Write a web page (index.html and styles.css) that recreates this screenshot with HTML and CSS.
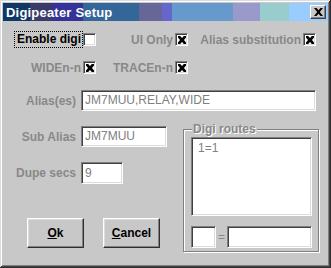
FILE: index.html
```html
<!DOCTYPE html>
<html>
<head>
<meta charset="utf-8">
<link rel="stylesheet" href="styles.css">
</head>
<body>
<div class="win">
  <div class="title">
    <span class="title-text">Digipeater Setup</span>
    <span class="close"><svg width="9" height="8" viewBox="0 0 9 8"><path d="M0 0h2.5l2 2.3 2-2.3h2.5l-3.2 4 3.2 4h-2.5l-2-2.3-2 2.3h-2.5l3.2-4z" fill="#000"/></svg></span>
  </div>
  <div class="checks">
    <span class="lbl lbl-focus"><span class="focus">Enable digi</span></span>
    <span class="cb"></span>
    <span class="lbl dis">UI Only</span>
    <span class="cb"><svg width="8" height="8" viewBox="0 0 8 8"><path d="M0 0h2.2l1.8 2 1.8-2h2.2v1.6l-2 2.4 2 2.4v1.6h-2.2l-1.8-2-1.8 2h-2.2v-1.6l2-2.4-2-2.4z" fill="#000"/></svg></span>
    <span class="lbl dis">Alias substitution</span>
    <span class="cb"><svg width="8" height="8" viewBox="0 0 8 8"><path d="M0 0h2.2l1.8 2 1.8-2h2.2v1.6l-2 2.4 2 2.4v1.6h-2.2l-1.8-2-1.8 2h-2.2v-1.6l2-2.4-2-2.4z" fill="#000"/></svg></span>
    <span class="lbl dis">WIDEn-n</span>
    <span class="cb"><svg width="8" height="8" viewBox="0 0 8 8"><path d="M0 0h2.2l1.8 2 1.8-2h2.2v1.6l-2 2.4 2 2.4v1.6h-2.2l-1.8-2-1.8 2h-2.2v-1.6l2-2.4-2-2.4z" fill="#000"/></svg></span>
    <span class="lbl dis">TRACEn-n</span>
    <span class="cb"><svg width="8" height="8" viewBox="0 0 8 8"><path d="M0 0h2.2l1.8 2 1.8-2h2.2v1.6l-2 2.4 2 2.4v1.6h-2.2l-1.8-2-1.8 2h-2.2v-1.6l2-2.4-2-2.4z" fill="#000"/></svg></span>
  </div>
  <div class="row row-alias">
    <span class="rlabel dis">Alias(es)</span>
    <span class="field field-alias">JM7MUU,RELAY,WIDE</span>
  </div>
  <div class="lower">
    <div class="left">
      <div class="row">
        <span class="rlabel dis">Sub Alias</span>
        <span class="field field-sub">JM7MUU</span>
      </div>
      <div class="row row-dupe">
        <span class="rlabel dis">Dupe secs</span>
        <span class="field field-dupe">9</span>
      </div>
      <div class="buttons">
        <span class="btn"><u>O</u>k</span>
        <span class="btn"><u>C</u>ancel</span>
      </div>
    </div>
    <div class="group">
      <span class="legend">Digi routes</span>
      <div class="field listbox">1=1</div>
      <div class="route-row">
        <span class="field small"></span>
        <span class="eq">=</span>
        <span class="field big"></span>
      </div>
    </div>
  </div>
</div>
</body>
</html>
```
FILE: styles.css
```css
html, body {
  margin: 0;
  padding: 0;
  background: #c8c8c8;
}
.win {
  width: 331px;
  height: 268px;
  box-sizing: border-box;
  padding: 3px;
  background: #c8c8c8;
  box-shadow: inset -1px -1px 0 #303030, inset 1px 1px 0 #dcdcdc, inset -2px -2px 0 #404040, inset 2px 2px 0 #ffffff, inset -3px -3px 0 #808080;
  font-family: "Liberation Sans", Arial, sans-serif;
  font-size: 12px;
  font-weight: bold;
  color: #000;
  overflow: hidden;
}
.title {
  height: 18px;
  display: flex;
  align-items: center;
  justify-content: space-between;
  padding: 0 2px 0 3px;
  background: linear-gradient(to right,
    #0f3866 0, #0f3866 27px,
    #3a3a6b 27px, #3a3a6b 49px,
    #333399 49px, #333399 80px,
    #336699 80px, #336699 136px,
    #666699 136px, #666699 159px,
    #6666cc 159px, #6666cc 169px,
    #6699cc 169px, #6699cc 230px,
    #9999cc 230px, #9999cc 257px,
    #99cccc 257px, #99cccc 286px,
    #99ccff 286px, #99ccff 100%);
}
.title-text {
  color: #fff;
  font-size: 13px;
  font-weight: bold;
  letter-spacing: 0.2px;
}
.close {
  width: 16px;
  height: 14px;
  box-sizing: border-box;
  background: #c8c8c8;
  border: 1px solid;
  border-color: #fff #404040 #404040 #fff;
  box-shadow: inset -1px -1px 0 #808080;
  display: flex;
  align-items: center;
  justify-content: center;
}
.checks {
  display: grid;
  grid-template-columns: 80px 13px 79px 13px 115px 13px;
  grid-auto-rows: 17px;
  row-gap: 11px;
  margin-top: 10px;
  align-items: center;
}
.lbl {
  justify-self: end;
  padding-right: 2px;
  line-height: 14px;
}
.lbl-focus {
  padding-right: 0;
}
.focus {
  display: inline-block;
  border: 1px dotted #000;
  padding: 0 1px 0 2px;
  line-height: 15px;
}
.dis {
  color: #888888;
}
.cb {
  width: 13px;
  height: 13px;
  box-sizing: border-box;
  background: #fff;
  border: 1px solid;
  border-color: #808080 #fff #fff #808080;
  box-shadow: inset 1px 1px 0 #404040, inset -1px -1px 0 #dcdcdc;
  display: flex;
  align-items: center;
  justify-content: center;
}
.row {
  display: flex;
  align-items: center;
}
.row-alias {
  margin-top: 14px;
}
.rlabel {
  width: 73px;
  text-align: right;
  margin-right: 5px;
}
.field {
  box-sizing: border-box;
  background: #fff;
  border: 1px solid;
  border-color: #808080 #fff #fff #808080;
  box-shadow: inset 1px 1px 0 #404040, inset -1px -1px 0 #dcdcdc;
  color: #808080;
  font-weight: normal;
  font-size: 12px;
  padding: 0 3px;
  line-height: 19px;
  white-space: nowrap;
}
.field-alias {
  width: 235px;
  height: 21px;
}
.field-sub {
  width: 86px;
  height: 21px;
}
.field-dupe {
  width: 42px;
  height: 22px;
  line-height: 20px;
}
.lower {
  display: flex;
  align-items: flex-start;
  margin-top: 12px;
}
.left {
  width: 180px;
  padding-top: 3px;
}
.row-dupe {
  margin-top: 15px;
}
.buttons {
  display: flex;
  gap: 19px;
  margin-top: 34px;
  padding-left: 24px;
}
.btn {
  width: 57px;
  height: 30px;
  box-sizing: border-box;
  border: 1px solid;
  border-color: #fff #303030 #303030 #fff;
  box-shadow: inset -1px -1px 0 #808080, inset 1px 1px 0 #dcdcdc;
  display: flex;
  align-items: center;
  justify-content: center;
  font-size: 12px;
}
.group {
  position: relative;
  margin-top: 6px;
  width: 136px;
  height: 123px;
  box-sizing: border-box;
  border: 1px solid #808080;
  box-shadow: 1px 1px 0 #fff, inset 1px 1px 0 #fff;
  padding: 7px 0 0 7px;
}
.legend {
  position: absolute;
  top: -8px;
  left: 8px;
  padding: 0 1px;
  background: #c8c8c8;
  color: #888888;
  line-height: 14px;
  text-shadow: 1px 1px 0 #fff;
}
.listbox {
  width: 121px;
  height: 79px;
  padding: 3px 6px;
  line-height: 14px;
}
.route-row {
  display: flex;
  align-items: center;
  margin-top: 10px;
}
.small {
  width: 25px;
  height: 22px;
}
.eq {
  width: 11px;
  text-align: center;
  color: #888888;
  font-weight: normal;
  font-size: 12px;
}
.big {
  width: 85px;
  height: 22px;
}
```
